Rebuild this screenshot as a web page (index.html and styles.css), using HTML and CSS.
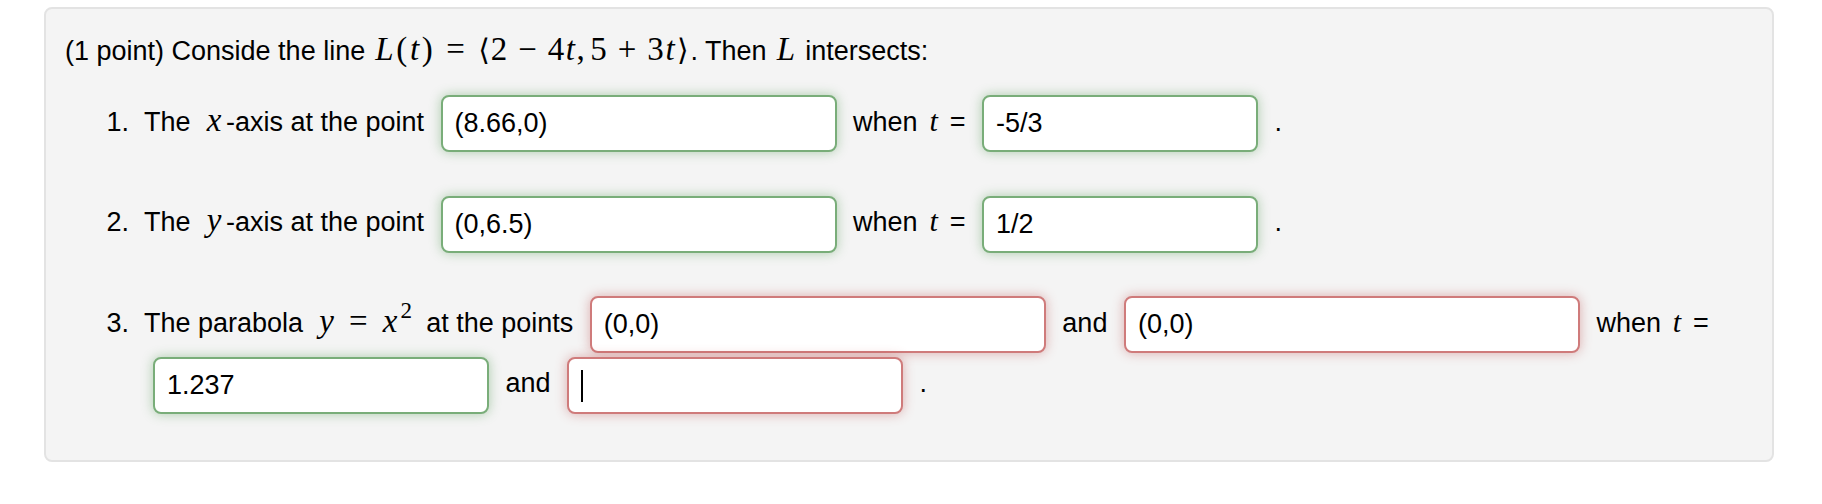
FILE: index.html
```html
<!DOCTYPE html>
<html>
<head>
<meta charset="utf-8">
<link rel="stylesheet" href="styles.css">
</head>
<body>
<div class="problem">
  <p class="intro">(1 point) Conside the line <span class="m"><i>L</i><span class="p">(</span><i>t</i><span class="p">)</span><span class="rel">=</span><span class="ang">⟨</span>2<span class="bin">−</span>4<i>t</i>,<span class="thin"></span>5<span class="bin">+</span>3<i>t</i><span class="ang">⟩</span></span>. Then <span class="m"><i>L</i></span> intersects:</p>
  <ol class="items">
    <li>The <span class="m"><i>x</i></span>-axis at the point <span class="field ok w396">(8.66,0)</span> when <span class="m t"><i>t</i></span> = <span class="field ok w276">-5/3</span> .</li>
    <li>The <span class="m"><i>y</i></span>-axis at the point <span class="field ok w396">(0,6.5)</span> when <span class="m t"><i>t</i></span> = <span class="field ok w276">1/2</span> .</li>
    <li>The parabola <span class="m"><i>y</i><span class="rel">=</span><i>x</i><sup>2</sup></span> at the points <span class="field bad w456">(0,0)</span> and <span class="field bad w456">(0,0)</span> when <span class="m t"><i>t</i></span> = <span class="field ok w336">1.237</span> and <span class="field bad w336"><span class="caret"></span></span> .</li>
  </ol>
</div>
</body>
</html>
```
FILE: styles.css
```css
html, body {
  margin: 0;
  padding: 0;
  background: #ffffff;
}
body {
  font-family: "Liberation Sans", Arial, Helvetica, sans-serif;
  font-size: 27px;
  color: #000000;
}
.problem {
  margin: 7px 0 0 44px;
  width: 1688px;
  height: 427px;
  padding: 24px 19px 0 19px;
  background: #f4f4f4;
  border: 2px solid #e3e3e3;
  border-radius: 8px;
}
.intro {
  margin: 0;
  line-height: 30px;
}
.items {
  margin: 26px 0 0 0;
  padding: 0 0 0 79px;
}
.items li {
  line-height: 60px;
  margin-bottom: 40px;
}
.items li::marker {
  content: counter(list-item) ".\00a0\00a0";
}
.m {
  font-family: "Liberation Serif", "DejaVu Serif", "Times New Roman", serif;
  font-size: 33px;
  line-height: 1;
  white-space: nowrap;
  margin: 0 2px 0 6px;
}
.intro .m {
  margin: 0 1px;
}
.m.t {
  font-size: 30px;
  margin: 0 2px;
}
.m i {
  font-style: italic;
  margin: 0 0.05em;
}
.items .m i {
  margin: 0 0.08em;
}
.m .p {
  margin: 0 0.03em;
}
.m .rel {
  margin: 0 0.38em;
}
.m .bin {
  margin: 0 0.33em;
}
.m .thin {
  display: inline-block;
  width: 0.167em;
}
.m .ang {
  font-family: "DejaVu Serif", serif;
  font-size: 0.9em;
  margin: 0 0.03em;
}
.m sup {
  font-size: 0.7em;
  line-height: 0;
  vertical-align: 0.6em;
  margin-left: 0.02em;
  margin-right: 0.2em;
}
.field {
  display: inline-block;
  box-sizing: border-box;
  height: 57px;
  line-height: 53px;
  vertical-align: middle;
  margin: 0 9px;
  padding: 0 12px;
  background: #ffffff;
  border: 2px solid #7aae7a;
  border-radius: 8px;
  font-family: "Liberation Sans", Arial, sans-serif;
  font-size: 27px;
  text-align: left;
}
.field.ok {
  border-color: #79ad79;
  box-shadow: 0 0 12px rgba(81, 153, 81, 0.45);
}
.field.bad {
  border-color: #cf7b7b;
  box-shadow: 0 0 12px rgba(191, 84, 84, 0.45);
}
.w396 { width: 396px; }
.w276 { width: 276px; }
.w456 { width: 456px; }
.w336 { width: 336px; }
.caret {
  display: inline-block;
  width: 2px;
  height: 32px;
  background: #000000;
  vertical-align: middle;
}
```
